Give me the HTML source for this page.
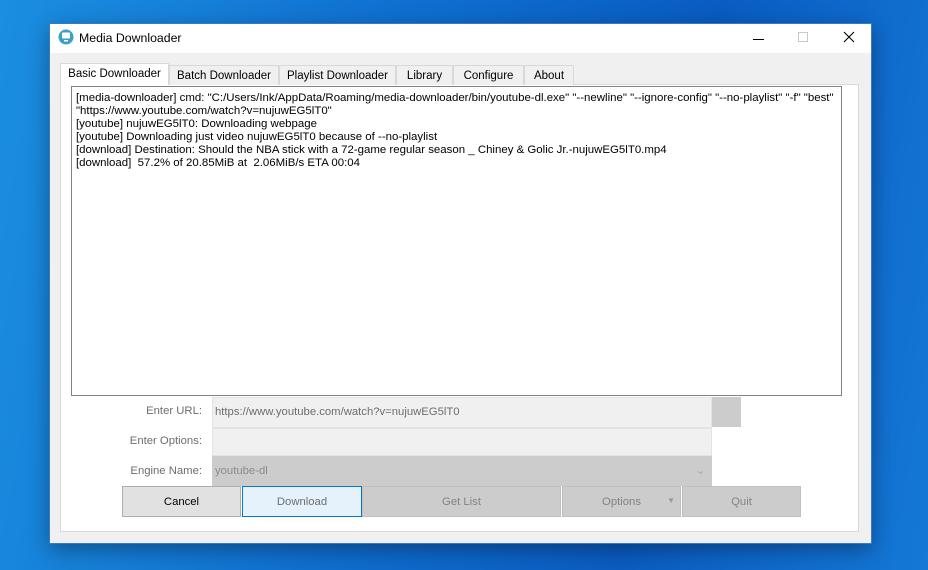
<!DOCTYPE html><html><head><style>
*{margin:0;padding:0;box-sizing:border-box}
body{width:928px;height:570px;overflow:hidden;position:relative;font-family:"Liberation Sans",sans-serif;font-size:11.5px;color:#000;
background:linear-gradient(100deg,#1b8ee0 0%,#0f6fd0 40%,#0a5cc2 70%,#1478d6 100%)}
.a{position:absolute}
.win{left:49px;top:23px;width:823px;height:521px;background:#f0f0f0;border:1px solid #3a78c0;box-shadow:0 6px 20px rgba(0,0,0,.35)}
.title{left:0;top:0;width:821px;height:29px;background:#fff}
.tab{top:41px;height:20px;border:1px solid #d9d9d9;border-bottom:none;background:#f0f0f0;text-align:center;line-height:20px;font-size:11.5px}
.panel{left:10px;top:60px;width:799px;height:448px;background:#fff;border:1px solid #d9d9d9}
.txt{left:21px;top:62px;width:771px;height:310px;border:1px solid #828282;background:#fff;padding:5px 4px;line-height:13px;font-size:11.44px;white-space:pre;overflow:hidden}
.lbl{width:150px;text-align:right;color:#6d6d6d;font-size:11.3px}
.fld{background:#f0f0f0;border:1px solid #e3e3e3;color:#6d6d6d;padding-left:2px;font-size:11.3px}
.btn{top:462px;height:31px;text-align:center;line-height:31px;background:#ccc;border:1px solid #bfbfbf;color:#838383;font-size:11.3px}
</style></head><body>
<div class="a win">
 <div class="a title">
  <svg class="a" style="left:8px;top:5px" width="16" height="16" viewBox="0 0 16 16"><circle cx="8" cy="8" r="7.5" fill="#3aa0c8"/><rect x="4" y="3.5" width="8" height="6" rx="1" fill="#fff"/><rect x="6" y="11" width="4" height="1.5" fill="#fff"/></svg>
  <div class="a" style="left:29px;top:7px;font-size:12.3px">Media Downloader</div>
  <div class="a" style="left:703px;top:15px;width:11px;height:1px;background:#000"></div>
  <div class="a" style="left:748px;top:8px;width:10px;height:10px;border:1px solid #c8c8c8"></div>
  <svg class="a" style="left:793px;top:7px" width="12" height="12"><path d="M1 1L11 11M11 1L1 11" stroke="#000" stroke-width="1.1"/></svg>
 </div>
 <div class="a panel"></div>
 <div class="a tab" style="left:10px;top:39px;height:22px;width:109px;background:#fff;z-index:2;line-height:21px">Basic Downloader</div>
 <div class="a tab" style="left:119px;width:110px">Batch Downloader</div>
 <div class="a tab" style="left:229px;width:117px">Playlist Downloader</div>
 <div class="a tab" style="left:346px;width:57px">Library</div>
 <div class="a tab" style="left:403px;width:71px">Configure</div>
 <div class="a tab" style="left:474px;width:50px">About</div>
 <div class="a txt">[media-downloader] cmd: "C:/Users/Ink/AppData/Roaming/media-downloader/bin/youtube-dl.exe" "--newline" "--ignore-config" "--no-playlist" "-f" "best"
"https://www.youtube.com/watch?v=nujuwEG5lT0"
[youtube] nujuwEG5lT0: Downloading webpage
[youtube] Downloading just video nujuwEG5lT0 because of --no-playlist
[download] Destination: Should the NBA stick with a 72-game regular season _ Chiney &amp; Golic Jr.-nujuwEG5lT0.mp4
[download]  57.2% of 20.85MiB at  2.06MiB/s ETA 00:04</div>
 <div class="a lbl" style="left:2px;top:381px">Enter URL:</div>
 <div class="a lbl" style="left:2px;top:411px">Enter Options:</div>
 <div class="a lbl" style="left:2px;top:441px">Engine Name:</div>
 <div class="a fld" style="left:162px;top:373px;width:500px;height:31px;line-height:29px">https://www.youtube.com/watch?v=nujuwEG5lT0</div>
 <div class="a" style="left:662px;top:373px;width:29px;height:30px;background:#ccc"></div>
 <div class="a fld" style="left:162px;top:404px;width:500px;height:28px"></div>
 <div class="a fld" style="left:162px;top:432px;width:500px;height:30px;line-height:28px;background:#ccc;border-color:#ccc;color:#8a8a8a">youtube-dl<span style="position:absolute;right:6px;color:#aaa">&#8964;</span></div>
 <div class="a btn" style="left:72px;width:119px;background:#e1e1e1;border-color:#adadad;color:#000">Cancel</div>
 <div class="a btn" style="left:192px;width:120px;background:#e5f1fb;border-color:#0078d7;color:#6d6d6d">Download</div>
 <div class="a btn" style="left:312px;width:199px">Get List</div>
 <div class="a btn" style="left:512px;width:119px">Options<span style="position:absolute;right:5px;top:-2px;font-size:8px;color:#999">&#9660;</span></div>
 <div class="a btn" style="left:632px;width:119px">Quit</div>
</div>
</body></html>
